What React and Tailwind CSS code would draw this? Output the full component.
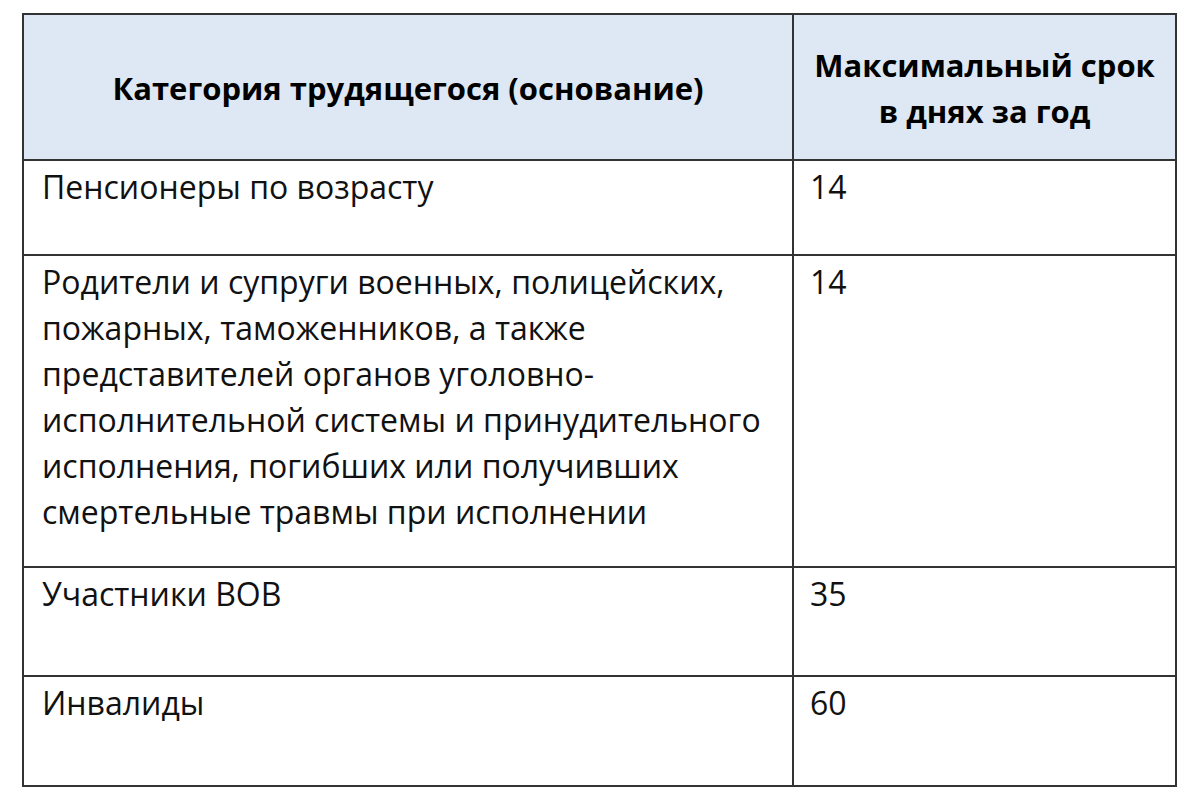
const ROWS = [
    { lines: ['Пенсионеры по возрасту'], days: '14', h: 'h-[95px]' },
    {
        lines: [
            'Родители и супруги военных, полицейских,',
            'пожарных, таможенников, а также',
            'представителей органов уголовно-',
            'исполнительной системы и принудительного',
            'исполнения, погибших или получивших',
            'смертельные травмы при исполнении',
        ],
        days: '14',
        h: 'h-[312px]',
    },
    { lines: ['Участники ВОВ'], days: '35', h: 'h-[109px]' },
    { lines: ['Инвалиды'], days: '60', h: 'h-[108px]', last: true },
]

export default function App() {
    return (
        <div className="w-[1200px] h-[800px] bg-white pt-[13px] pl-[22px] font-['Open_Sans',sans-serif] text-[#111]">
            <div className="w-[1155px] border-2 border-[#333]">
                <div className="grid grid-cols-[770px_381px] h-[146px] bg-[#dde8f4] border-b-2 border-[#333]">
                    <div className="border-r-2 border-[#333] flex items-center justify-center text-[31px] leading-[46px] font-bold text-black pt-[2px]">
                        Категория трудящегося (основание)
                    </div>
                    <div className="flex flex-col items-center justify-center text-[31px] leading-[46px] font-bold text-black pt-[2px]">
                        <span className="whitespace-nowrap">Максимальный срок</span>
                        <span className="whitespace-nowrap">в днях за год</span>
                    </div>
                </div>
                {ROWS.map((row, i) => (
                    <div
                        key={i}
                        className={`grid grid-cols-[770px_381px] ${row.h} ${row.last ? '' : 'border-b-2 border-[#333]'}`}
                    >
                        <div className="border-r-2 border-[#333] pl-[18px] pt-[3px] text-[32px] leading-[46px]">
                            {row.lines.map((line, j) => (
                                <div key={j} className="whitespace-nowrap">{line}</div>
                            ))}
                        </div>
                        <div className="pl-[16px] pt-[3px] text-[32px] leading-[46px]">{row.days}</div>
                    </div>
                ))}
            </div>
        </div>
    )
}
